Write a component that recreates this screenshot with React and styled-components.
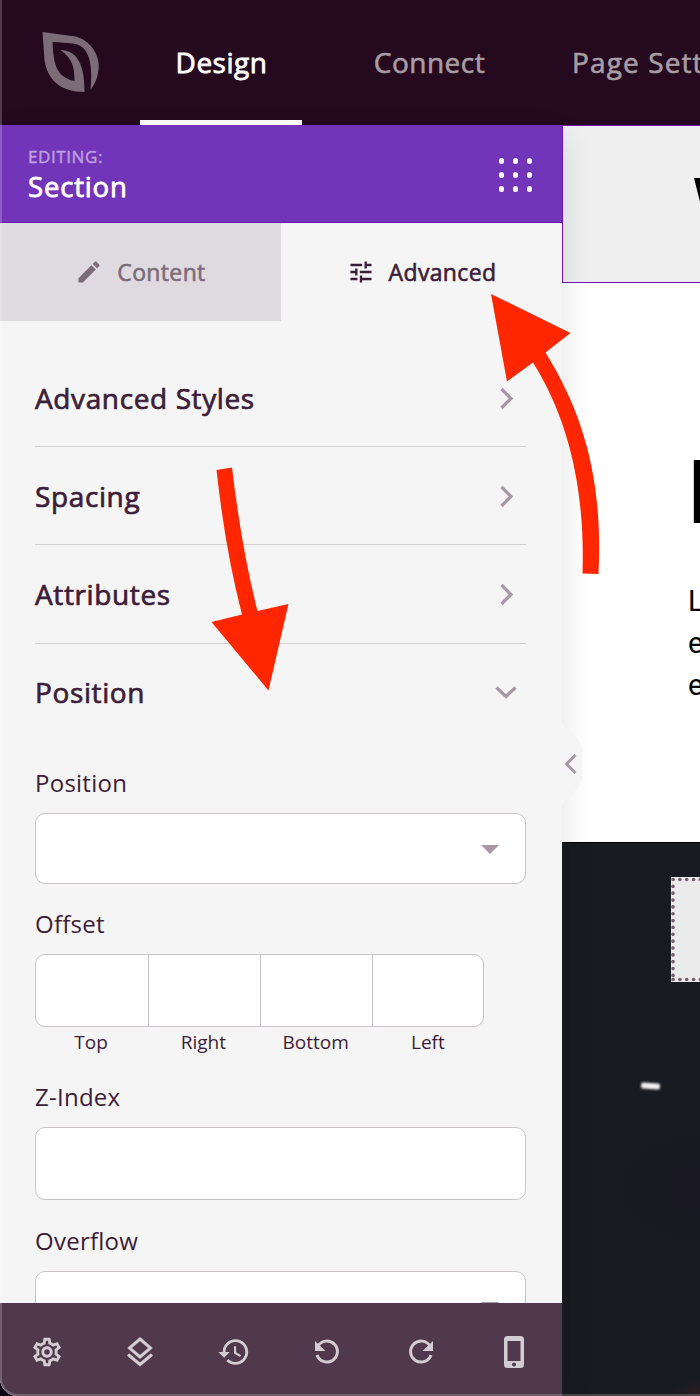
import React from "react";
import styled, { createGlobalStyle, css } from "styled-components";
import {
  MdOutlineSettings,
  MdHistory,
  MdTune,
  MdEdit,
} from "react-icons/md";

const offsets = ["Top", "Right", "Bottom", "Left"];

export default function App() {
  return (
    <Screen>
      <GlobalStyle />
      <Wrapper>
        <TopBar>
          <Logo viewBox="0 0 56 60">
            <path
              fillRule="evenodd"
              d="M0 0L29 4C43 5 54 17 56 30C57 41 54 50 48 58C50 36 48 20 38 14C33 11 27 11 10 10C11 31 13 45 32 49C32 37 31 27 18 18C35 19 42 32 42 60C18 60 5 48 2 28Z"
            />
          </Logo>
          <NavItem $active $width={162}>Design</NavItem>
          <NavItem $width={254}>Connect</NavItem>
          <NavItem $left={16} $spacing={0.04}>Page Settings</NavItem>
        </TopBar>
        <Main>
          <Panel>
            <PanelHead>
              <div>
                <Editing>EDITING:</Editing>
                <SectionName>Section</SectionName>
              </div>
              <Dots>
                {[...Array(9)].map((_, i) => (
                  <Dot key={i} />
                ))}
              </Dots>
            </PanelHead>
            <Tabs>
              <Tab>
                <MdEdit size={28} />
                Content
              </Tab>
              <Tab $active>
                <MdTune size={28} />
                Advanced
              </Tab>
            </Tabs>
            <PanelBody>
              <AccordionRow>Advanced Styles <Chevron /></AccordionRow>
              <AccordionRow>Spacing <Chevron /></AccordionRow>
              <AccordionRow>Attributes <Chevron /></AccordionRow>
              <AccordionRow $open>Position <Chevron $open /></AccordionRow>
              <Fields>
                <Field $gap={23}>
                  <Label>Position</Label>
                  <Box $height={71}>
                    <Caret viewBox="0 0 18 9">
                      <path d="M0 0H18L9 9Z" />
                    </Caret>
                  </Box>
                </Field>
                <Field $gap={11}>
                  <Label>Offset</Label>
                  <OffsetBox>
                    {offsets.map((name) => (
                      <OffsetCell key={name} />
                    ))}
                  </OffsetBox>
                  <OffsetNames>
                    {offsets.map((name) => (
                      <span key={name}>{name}</span>
                    ))}
                  </OffsetNames>
                </Field>
                <Field $gap={24}>
                  <Label>Z-Index</Label>
                  <Box $height={73} />
                </Field>
                <Field>
                  <Label>Overflow</Label>
                  <Box $height={73}>
                    <Caret viewBox="0 0 18 9" $raised>
                      <path d="M0 0H18L9 9Z" />
                    </Caret>
                  </Box>
                </Field>
              </Fields>
            </PanelBody>
            <Toolbar>
              <MdOutlineSettings size={34} />
              <ToolIcon viewBox="0 0 34 34">
                <path d="M17 4L27.500 13L17 22L6.500 13Z M5 19.500L17 29.500L29 19.500" />
              </ToolIcon>
              <MdHistory size={34} />
              <ToolIcon viewBox="0 0 34 34">
                <path d="M8 11A10.500 10.500 0 1 1 7 20" />
                <path className="solid" d="M5 6V16H15.500Z" />
              </ToolIcon>
              <ToolIcon viewBox="0 0 34 34">
                <path d="M26 11A10.500 10.500 0 1 0 27 20" />
                <path className="solid" d="M29 6V16H18.500Z" />
              </ToolIcon>
              <ToolIcon viewBox="0 0 34 34">
                <path
                  className="solid"
                  fillRule="evenodd"
                  d="M10.500 1H23.500Q27 1 27 4.500V29.500Q27 33 23.500 33H10.500Q7 33 7 29.500V4.500Q7 1 10.500 1ZM10.500 6H23.500V26H10.500ZM17 27.500A2 2 0 1 0 17 31.500A2 2 0 1 0 17 27.500Z"
                />
              </ToolIcon>
            </Toolbar>
          </Panel>
          <Canvas>
            <HeaderBlock>
              <BigText>W</BigText>
            </HeaderBlock>
            <TextBlock>
              <Heading>H</Heading>
              <Copy>
                Lorem
                <br />
                elit
                <br />
                et
              </Copy>
            </TextBlock>
            <DarkBlock>
              <Placeholder viewBox="0 0 40 105">
                <rect width="40" height="105" />
                <path d="M2 2.500H40M2 9.300V102.500M2 102.500H40" />
              </Placeholder>
              <Spark />
            </DarkBlock>
          </Canvas>
        </Main>
        <CollapseHandle viewBox="0 0 22 94">
          <path className="tab" d="M0 0C0 16 21 16 21 34V60C21 76 0 78 0 94Z" />
          <path className="chevron" d="M14.500 38L5.500 47L14.500 56" />
        </CollapseHandle>
        <Arrows viewBox="0 0 700 1396">
          <path d="M582.500 573.500C585 495 571 423 533 362.500L507 381.500L491 294L570.500 333L545.500 352.500C584 415 603 480 598.500 574Z" />
          <path d="M216.500 470L232 467.500C238 518 246 566 257.500 611L288.500 604L268.500 690.500L211.500 622L242 614.500C230 568 222 520 216.500 470Z" />
        </Arrows>
        <WindowEdge />
      </Wrapper>
    </Screen>
  );
}

function Chevron({ $open }) {
  return (
    <ChevronSvg viewBox="0 0 24 24">
      <path d={$open ? "M2.500 7.500L12 16.500L21.500 7.500" : "M7.500 3L17 12.500L7.500 22"} />
    </ChevronSvg>
  );
}

const GlobalStyle = createGlobalStyle`
  * {
    box-sizing: border-box;
  }
  body {
    margin: 0;
    overflow: hidden;
    font-family: "Open Sans", "Noto Sans", sans-serif;
  }
`;
// Open Sans between regular and semi-bold
const mediumText = css`
  font-weight: 400;
  letter-spacing: 0.015em;
  -webkit-text-stroke: 0.6px currentColor;
`;
const Screen = styled.div`
  width: 700px;
  height: 1396px;
  background: #090014;
`;
const Wrapper = styled.div`
  position: relative;
  width: 700px;
  height: 1396px;
  overflow: hidden;
  border-bottom-left-radius: 18px;
  background: #f5f5f5;
`;
const WindowEdge = styled.div`
  position: absolute;
  z-index: 4;
  inset: 0;
  border-left: 2px solid rgba(255, 255, 255, 0.2);
  border-bottom: 2px solid rgba(255, 255, 255, 0.2);
  border-bottom-left-radius: 18px;
  pointer-events: none;
`;
const TopBar = styled.header`
  display: flex;
  height: 125px;
  overflow: hidden;
  background: #25091f;
`;
const Logo = styled.svg`
  flex: none;
  width: 57px;
  height: 60px;
  margin: 32px 41px 0 42px;
  fill: #7c6c79;
`;
const NavItem = styled.div`
  flex: none;
  width: ${(props) => (props.$width ? `${props.$width}px` : "auto")};
  height: 125px;
  padding-left: ${(props) => props.$left || 1}px;
  border-bottom: 5px solid ${(props) => (props.$active ? "#fff" : "transparent")};
  color: ${(props) => (props.$active ? "#fff" : "#a89da5")};
  font-size: 28px;
  line-height: 124px;
  text-align: center;
  white-space: nowrap;
  ${mediumText}
  letter-spacing: ${(props) => props.$spacing || 0.018}em;
  ${(props) =>
    props.$active &&
    css`
      -webkit-text-stroke: 0.8px currentColor;
    `}
`;
const Main = styled.div`
  display: flex;
  height: 1271px;
`;
const Panel = styled.aside`
  z-index: 1;
  display: flex;
  flex: none;
  flex-direction: column;
  width: 562px;
  background: #f5f5f5;
  box-shadow: 0 12px 30px rgba(0, 0, 0, 0.12);
`;
const PanelHead = styled.div`
  display: flex;
  flex: none;
  justify-content: space-between;
  height: 98px;
  padding: 20px 29px 0 28px;
  border-bottom: 1px solid #6500b6;
  background: #7235ba;
`;
const Editing = styled.div`
  color: #bfa1df;
  font-size: 17px;
  line-height: 24px;
  ${mediumText}
  letter-spacing: 0.035em;
  -webkit-text-stroke: 0.4px currentColor;
`;
const SectionName = styled.div`
  color: #fff;
  font-size: 27.500px;
  line-height: 36px;
  ${mediumText}
  letter-spacing: 0.03em;
  -webkit-text-stroke: 0.8px currentColor;
`;
const Dots = styled.div`
  display: grid;
  grid-template-columns: repeat(3, 5.5px);
  gap: 8.500px;
  align-content: start;
  padding: 13px 1px 0 0;
`;
const Dot = styled.i`
  width: 5.500px;
  height: 5.500px;
  border-radius: 50%;
  background: #fff;
`;
const Tabs = styled.div`
  display: flex;
  flex: none;
  height: 98px;
`;
const Tab = styled.div`
  display: flex;
  flex: 1;
  align-items: center;
  justify-content: center;
  gap: 14px;
  background: ${(props) => (props.$active ? "#f5f5f5" : "#dedadf")};
  color: ${(props) => (props.$active ? "#3c1d3a" : "#7c6b79")};
  font-size: 23px;
  ${mediumText}

  svg {
    stroke-width: 0;
  }
`;
const PanelBody = styled.div`
  flex: 1;
  min-height: 0;
  overflow: hidden;
  padding: 28px 36px 0 35px;
  color: #3c1d3a;
`;
const AccordionRow = styled.div`
  display: flex;
  align-items: center;
  justify-content: space-between;
  height: 98.200px;
  padding-right: 8px;
  border-bottom: 1px solid ${(props) => (props.$open ? "transparent" : "#d3cfd3")};
  font-size: 28px;
  ${mediumText}
  letter-spacing: 0.022em;
  -webkit-text-stroke: 0.7px currentColor;
`;
const ChevronSvg = styled.svg`
  width: 24px;
  height: 24px;
  fill: none;
  stroke: #a698a5;
  stroke-width: 3.2;
`;
const Fields = styled.div`
  padding-top: 24px;
`;
const Field = styled.div`
  margin-bottom: ${(props) => props.$gap || 0}px;
`;
const Label = styled.div`
  height: 47px;
  font-size: 24px;
  letter-spacing: 0.25px;
  line-height: 33px;
`;
const Box = styled.div`
  display: flex;
  align-items: center;
  justify-content: flex-end;
  height: ${(props) => props.$height}px;
  padding-right: 26px;
  border: 1.5px solid #cac4ca;
  border-radius: 10px;
  background: #fff;
`;
const Caret = styled.svg`
  width: 18px;
  height: 9px;
  fill: #a698a5;
  transform: translateY(${(props) => (props.$raised ? -1 : 1)}px);
`;
const OffsetBox = styled.div`
  display: flex;
  width: 449px;
  height: 73px;
  border: 1.5px solid #cac4ca;
  border-radius: 10px;
  background: #fff;
`;
const OffsetCell = styled.div`
  flex: 0 0 112px;
  & + & {
    border-left: 1.5px solid #cac4ca;
  }
  &:last-child {
    flex: 1;
  }
`;
const OffsetNames = styled.div`
  display: grid;
  grid-template-columns: repeat(4, 1fr);
  width: 449px;
  height: 42px;
  font-size: 19px;
  line-height: 31px;
  text-align: center;
`;
const Toolbar = styled.footer`
  display: flex;
  flex: none;
  align-items: center;
  justify-content: space-between;
  height: 93px;
  padding: 5px 31px 0 30px;
  background: #50394d;
  color: #d3cdd3;
`;
const ToolIcon = styled.svg`
  width: 34px;
  height: 34px;
  fill: none;
  stroke: currentColor;
  stroke-width: 3;
  .solid {
    fill: currentColor;
    stroke: none;
  }
`;
const Canvas = styled.main`
  flex: 1;
  min-width: 0;
  overflow: hidden;
  background: #fff;
`;
const HeaderBlock = styled.div`
  height: 158px;
  padding: 29px 0 0 131px;
  overflow: hidden;
  border: 1.5px solid #7214bd;
  border-right: 0;
  background: #efefef;
`;
const BigText = styled.div`
  color: #000;
  font-size: 66px;
  font-weight: 700;
  line-height: 90px;
`;
const TextBlock = styled.div`
  height: 559px;
  padding: 138px 0 0 126px;
  color: #000;
`;
const Heading = styled.div`
  height: 136px;
  margin-left: -2px;
  font-size: 87px;
  font-weight: 700;
  line-height: 136px;
`;
const Copy = styled.div`
  padding-top: 23px;
  font-family: Roboto, sans-serif;
  font-size: 29px;
  line-height: 42px;
`;
const DarkBlock = styled.div`
  height: 554px;
  padding-top: 34px;
  border-top: 1px solid #000;
  background:
    radial-gradient(ellipse 28px 16px at 100% 100%, #2e1e24, transparent),
    radial-gradient(ellipse 90px 60px at 100% 345px, #1a1724, transparent),
    #181b20;
`;
const Placeholder = styled.svg`
  display: block;
  width: 40px;
  height: 105px;
  margin-left: 109px;
  rect {
    fill: #ebebeb;
  }
  path {
    fill: none;
    stroke: #705f6e;
    stroke-width: 3.6;
    stroke-linecap: round;
    stroke-dasharray: 0.1 6.750;
  }
`;
const Spark = styled.div`
  width: 19px;
  height: 6px;
  margin: 101px 0 0 79px;
  border-radius: 2px;
  background: #f1eeee;
  filter: blur(1px);
  transform: rotate(4deg);
`;
const CollapseHandle = styled.svg`
  position: absolute;
  z-index: 2;
  top: 717px;
  left: 561px;
  width: 22px;
  height: 94px;
  .tab {
    fill: #f5f5f5;
  }
  .chevron {
    fill: none;
    stroke: #a698a5;
    stroke-width: 3;
  }
`;
const Arrows = styled.svg`
  position: absolute;
  z-index: 3;
  inset: 0;
  width: 700px;
  height: 1396px;
  fill: #ff2600;
  pointer-events: none;
`;
